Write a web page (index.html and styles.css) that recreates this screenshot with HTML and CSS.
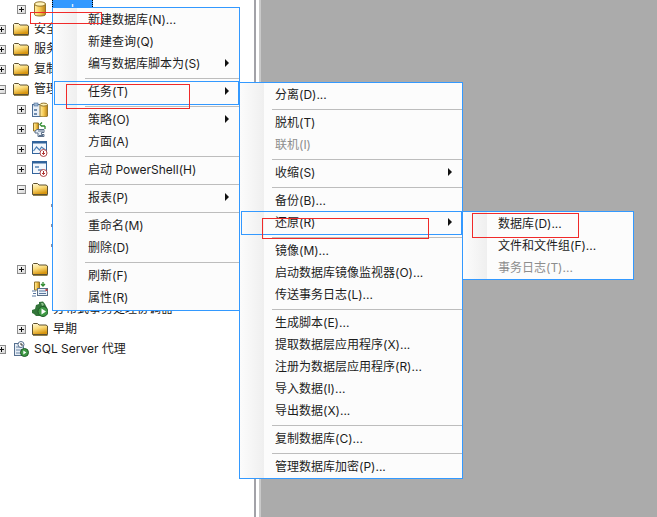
FILE: index.html
```html
<!DOCTYPE html>
<html lang="zh-CN">
<head>
<meta charset="utf-8">
<title>SQL Server 还原数据库</title>
<link rel="stylesheet" href="styles.css">
</head>
<body>
<svg class="defs" aria-hidden="true">
  <defs>
    <linearGradient id="gFolder" x1="0" y1="0" x2="0.35" y2="1"><stop offset="0" stop-color="#fffbe0"/><stop offset=".5" stop-color="#fbdc7c"/><stop offset="1" stop-color="#d8960f"/></linearGradient>
    <linearGradient id="gDb" x1="0" y1="0" x2="1" y2="0"><stop offset="0" stop-color="#fff0a8"/><stop offset=".5" stop-color="#f6c850"/><stop offset="1" stop-color="#b98216"/></linearGradient>
    <linearGradient id="gBox" x1="0" y1="0" x2="1" y2="1"><stop offset="0" stop-color="#fff"/><stop offset="1" stop-color="#d4d4d4"/></linearGradient>
    <symbol id="plus" viewBox="0 0 9 9"><rect x=".5" y=".5" width="8" height="8" fill="url(#gBox)" stroke="#8c8c8c"/><path d="M2 4.5h5M4.5 2v5" stroke="#111" fill="none"/></symbol>
    <symbol id="minus" viewBox="0 0 9 9"><rect x=".5" y=".5" width="8" height="8" fill="url(#gBox)" stroke="#8c8c8c"/><path d="M2 4.5h5" stroke="#111" fill="none"/></symbol>
    <symbol id="folder" viewBox="0 0 16 16"><path d="M.5 13.500v-10l1-1h4l1.500 1.500h7l1.500 1v8.500z" fill="url(#gFolder)" stroke="#5f5230"/><path d="M1 14.500h14.500" stroke="#8f8050"/></symbol>
    <symbol id="db" viewBox="0 0 16 16"><path d="M2.500 3v10.500c0 2 11 2 11 0V3z" fill="url(#gDb)" stroke="#93752d"/><ellipse cx="8" cy="3" rx="5.500" ry="2.200" fill="#fff3b8" stroke="#93752d"/></symbol>
    <symbol id="ic-a" viewBox="0 0 16 16"><rect x=".5" y="3.500" width="11" height="12" fill="#e9f0f8" stroke="#4f6f96"/><rect x="2" y="2" width="4" height="3" fill="#9fb8d4" stroke="#4f6f96" stroke-width=".6"/><path d="M2 8h3v2H2zM2 12h3v2H2z" fill="#6f8db0"/><path d="M8 4v11c0 1.200 7.500 1.200 7.500 0V4z" fill="url(#gDb)" stroke="#93752d"/><ellipse cx="11.750" cy="3.600" rx="3.700" ry="1.500" fill="#fff3b8" stroke="#93752d"/></symbol>
    <symbol id="ic-b" viewBox="0 0 16 16"><path d="M1.500 2v8h5V2z" fill="url(#gDb)" stroke="#93752d"/><path d="M9 5h4M10 1.500l-2 2 2 2M13 5v3" stroke="#2e8a2e" stroke-width="1.300" fill="none"/><path d="M5 8.500h7v3H9.500v2H12v2H6v-3.500H3V10z" fill="#e4ecf5" stroke="#5b6f88"/><path d="M6 10h5M7 14.500h4" stroke="#5b6f88"/></symbol>
    <symbol id="ic-c" viewBox="0 0 16 16"><rect x=".5" y=".5" width="14" height="12" fill="#f3f7fc" stroke="#32649c"/><path d="M.5.500h14v2H.5z" fill="#32649c"/><path d="M1.500 10l3-4 3 3 2-3 4 3" stroke="#4c7fb4" stroke-width="1.200" fill="none"/><circle cx="11.500" cy="12" r="3.500" fill="#fff" stroke="#b04848"/><path d="M11.500 10v3.500M10 12l1.500 1.500L13 12" stroke="#b03030" fill="none"/></symbol>
    <symbol id="ic-d" viewBox="0 0 16 16"><rect x=".5" y=".5" width="14" height="12" fill="#f3f7fc" stroke="#32649c"/><path d="M.5.500h14v2H.5z" fill="#32649c"/><path d="M3 5h4v2H3zM6 8h5v2H6z" fill="#7fa3c8"/><circle cx="11.500" cy="12" r="3.500" fill="#fff" stroke="#b04848"/><path d="M11.500 10v3.500M10 12l1.500 1.500L13 12" stroke="#b03030" fill="none"/></symbol>
    <symbol id="ic-e" viewBox="0 0 16 16"><path d="M2.500 1v8h5V1z" fill="url(#gDb)" stroke="#93752d"/><path d="M11 1v3.500M9 3l2 2 2-2" stroke="#2e8a2e" stroke-width="1.300" fill="none"/><rect x="5.500" y="7.500" width="10" height="7" fill="#e9f0f8" stroke="#5b6f88"/><path d="M7 10h7M7 12.500h7" stroke="#5b78a0"/><path d="M0 10h4M1 12.500h3M0 15h4" stroke="#5b78a0"/><path d="M13.500 8h2v2h-2z" fill="#c43c3c"/></symbol>
    <symbol id="ic-f" viewBox="0 0 16 16"><path d="M0 9l3-1 1-4 3-1V1l4-.500 2 2.500 2 4v5l-3 3H4l-2-2-2-1z" fill="#33753a"/><path d="M9 2l2 0 1 2-2 1z" fill="#8cc08c"/><circle cx="11" cy="10.500" r="5" fill="#3f9a45" stroke="#1e5a26"/><path d="M9.500 7.500v6l4.500-3z" fill="#fff"/></symbol>
    <symbol id="ic-g" viewBox="0 0 16 16"><rect x="1.500" y="2.500" width="9" height="12" fill="#e6edf5" stroke="#56708f"/><path d="M3 6h6M3 9h6M3 12h6" stroke="#6a86a6"/><circle cx="8" cy="3.500" r="3" fill="#fff" stroke="#56708f"/><path d="M8 2v2h2" stroke="#333" fill="none"/><circle cx="11.500" cy="11.500" r="4" fill="#3f9a45" stroke="#1e5a26"/><path d="M10.300 9.500v4l3-2z" fill="#fff"/></symbol>
  </defs>
</svg>

<div class="shell">
  <div class="tree">
    <div class="row lv2"><svg class="exp"><use href="#plus"/></svg><svg class="ico"><use href="#db"/></svg><span class="label sel-label">l</span></div>
    <div class="row"><svg class="exp"><use href="#plus"/></svg><svg class="ico"><use href="#folder"/></svg><span class="label">安全性</span></div>
    <div class="row"><svg class="exp"><use href="#plus"/></svg><svg class="ico"><use href="#folder"/></svg><span class="label">服务器对象</span></div>
    <div class="row"><svg class="exp"><use href="#plus"/></svg><svg class="ico"><use href="#folder"/></svg><span class="label">复制</span></div>
    <div class="row"><svg class="exp"><use href="#minus"/></svg><svg class="ico"><use href="#folder"/></svg><span class="label">管理</span></div>
    <div class="row lv2"><svg class="exp"><use href="#plus"/></svg><svg class="ico"><use href="#ic-a"/></svg></div>
    <div class="row lv2"><svg class="exp"><use href="#plus"/></svg><svg class="ico"><use href="#ic-b"/></svg></div>
    <div class="row lv2"><svg class="exp"><use href="#plus"/></svg><svg class="ico"><use href="#ic-c"/></svg></div>
    <div class="row lv2"><svg class="exp"><use href="#plus"/></svg><svg class="ico"><use href="#ic-d"/></svg></div>
    <div class="row lv2"><svg class="exp"><use href="#minus"/></svg><svg class="ico"><use href="#folder"/></svg></div>
    <div class="row lv3"><i class="peek"></i></div>
    <div class="row lv3"><i class="peek"></i></div>
    <div class="row lv3"><i class="peek"></i></div>
    <div class="row lv2"><svg class="exp"><use href="#plus"/></svg><svg class="ico"><use href="#folder"/></svg></div>
    <div class="row lv2 noexp"><svg class="ico"><use href="#ic-e"/></svg></div>
    <div class="row lv2 noexp"><svg class="ico"><use href="#ic-f"/></svg><span class="label">分布式事务处理协调器</span></div>
    <div class="row lv2"><svg class="exp"><use href="#plus"/></svg><svg class="ico"><use href="#folder"/></svg><span class="label">早期</span></div>
    <div class="row"><svg class="exp"><use href="#plus"/></svg><svg class="ico"><use href="#ic-g"/></svg><span class="label">SQL Server 代理</span></div>
  </div>
  <div class="split"></div>
  <div class="desk"></div>
</div>

<div class="menu m1">
  <div class="item">新建数据库(N)...</div>
  <div class="item">新建查询(Q)</div>
  <div class="item sub">编写数据库脚本为(S)</div>
  <div class="sep"></div>
  <div class="item sub sel">任务(T)</div>
  <div class="sep"></div>
  <div class="item sub">策略(O)</div>
  <div class="item">方面(A)</div>
  <div class="sep"></div>
  <div class="item">启动 PowerShell(H)</div>
  <div class="sep"></div>
  <div class="item sub">报表(P)</div>
  <div class="sep"></div>
  <div class="item">重命名(M)</div>
  <div class="item">删除(D)</div>
  <div class="sep"></div>
  <div class="item">刷新(F)</div>
  <div class="item">属性(R)</div>
</div>

<div class="menu m2">
  <div class="item">分离(D)...</div>
  <div class="sep"></div>
  <div class="item">脱机(T)</div>
  <div class="item off">联机(I)</div>
  <div class="sep"></div>
  <div class="item sub">收缩(S)</div>
  <div class="sep"></div>
  <div class="item">备份(B)...</div>
  <div class="item sub sel">还原(R)</div>
  <div class="sep"></div>
  <div class="item">镜像(M)...</div>
  <div class="item">启动数据库镜像监视器(O)...</div>
  <div class="item">传送事务日志(L)...</div>
  <div class="sep"></div>
  <div class="item">生成脚本(E)...</div>
  <div class="item">提取数据层应用程序(X)...</div>
  <div class="item">注册为数据层应用程序(R)...</div>
  <div class="item">导入数据(I)...</div>
  <div class="item">导出数据(X)...</div>
  <div class="sep"></div>
  <div class="item">复制数据库(C)...</div>
  <div class="sep"></div>
  <div class="item">管理数据库加密(P)...</div>
</div>

<div class="menu m3">
  <div class="item">数据库(D)...</div>
  <div class="item">文件和文件组(F)...</div>
  <div class="item off">事务日志(T)...</div>
</div>

<div class="mark r1"></div>
<div class="mark r2"></div>
<div class="mark r3"></div>
<div class="mark r4"></div>
</body>
</html>
```

FILE: styles.css
```css
* { box-sizing: border-box; }
html, body { margin: 0; height: 100%; overflow: hidden; }
body {
  background: #fff;
  color: #1c1c1c;
  font: 12px/20px Inter, "Noto Sans CJK SC", sans-serif;
}
.defs { position: absolute; width: 0; height: 0; }

.shell { display: flex; height: 517px; }
.tree { width: 254px; margin-top: -1px; overflow: hidden; flex: none; }
.split {
  width: 7px;
  flex: none;
  background: #fff;
  border-left: 2px solid #a2a2a8;
  border-right: 2px solid #c9c9c9;
}
.desk { flex: 1; background: #ababab; }

.row { display: flex; align-items: center; height: 20px; margin-left: -3px; white-space: nowrap; }
.row.lv2 { margin-left: 17px; }
.row.lv2 .exp { margin-right: 6px; }
.row.noexp { padding-left: 15px; }
.row.lv3 { margin-left: 51px; }
.exp { width: 9px; height: 9px; flex: none; margin-right: 7px; }
.ico { width: 16px; height: 16px; flex: none; }
.label { margin-left: 5px; }
.sel-label {
  width: 41px;
  margin-left: 4px;
  text-align: center;
  color: #fff;
  background: #3399ff;
  border: 1px dotted #000;
  border-width: 0 1px;
  align-self: stretch;
}
.peek { width: 2px; height: 3px; background: #8a8a9a; align-self: flex-start; margin-top: 5px; }

.menu {
  position: absolute;
  background: #fcfcfc;
  border: 1px solid #3399ff;
  padding-bottom: 1px;
}
.m1 { left: 52px; top: 7px; width: 188px; --gut: 24px; --txt: 35px; --sel: 1px; padding-bottom: 2px; }
.m2 { left: 239px; top: 82px; width: 224px; --gut: 24px; --txt: 35px; --sel: 0px; }
.m3 { left: 462px; top: 211px; width: 172px; --gut: 24px; --txt: 35px; }
.menu::before {
  content: "";
  position: absolute;
  left: 0;
  top: 0;
  bottom: 0;
  width: var(--gut);
  background: linear-gradient(to right, #fcfcfc, #efefef);
}
.item {
  position: relative;
  height: 22px;
  line-height: 23px;
  padding-left: var(--txt);
  white-space: nowrap;
}
.item.off { color: #8d8d8d; }
.item.sub::after {
  content: "";
  position: absolute;
  right: 10px;
  top: 7px;
  border-left: 4px solid #111;
  border-top: 4px solid transparent;
  border-bottom: 4px solid transparent;
}
.item.sel::before {
  content: "";
  position: absolute;
  left: 1px;
  right: 0;
  top: var(--sel);
  height: 22px;
  border: 1px solid #3399ff;
}
.sep {
  position: relative;
  height: 6px;
  padding-top: 4px;
  margin-left: 32px;
}
.sep::after { content: ""; display: block; height: 1px; background: #bdbdbd; }

.mark { position: absolute; border: 1px solid #f02a2a; }
.r1 { left: 30px; top: 12px; width: 72px; height: 12px; }
.r2 { left: 66px; top: 84px; width: 124px; height: 25px; }
.r3 { left: 262px; top: 218px; width: 167px; height: 21px; }
.r4 { left: 472px; top: 213px; width: 107px; height: 25px; }
```
